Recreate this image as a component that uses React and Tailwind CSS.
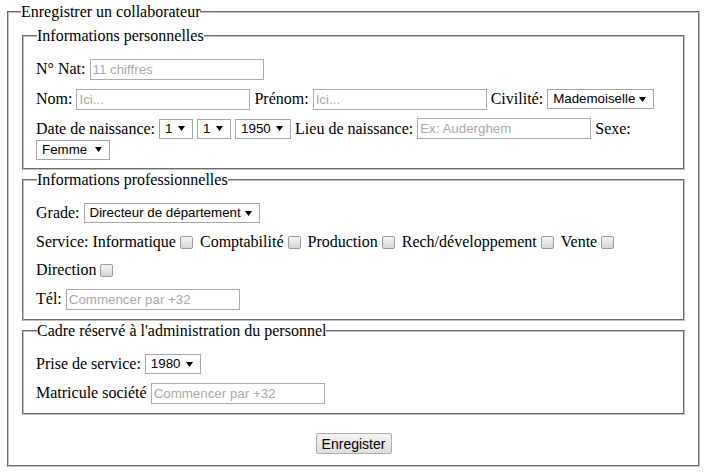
import React from "react";

function Field({ ph }) {
  return (
    <input
      type="text"
      placeholder={ph}
      className="h-[21px] w-[174px] shrink-0 border border-[#ababab] bg-white px-[2px] font-['Liberation_Sans',Arial,sans-serif] text-[13.33px] text-black outline-none placeholder:text-[#a9a9a9]"
    />
  );
}

function Arrow() {
  return (
    <svg width="7" height="5" viewBox="0 0 7 5" className="ml-auto shrink-0">
      <path d="M0 0H7L3.5 5Z" fill="#000" />
    </svg>
  );
}

function Sel({ w, children }) {
  return (
    <span
      className={
        "inline-flex h-[20px] shrink-0 items-center whitespace-nowrap border border-[#a6a6a6] bg-white pl-[5px] pr-[7px] font-['Liberation_Sans',Arial,sans-serif] text-[13.33px] leading-none text-black " +
        w
      }
    >
      <span>{children}</span>
      <Arrow />
    </span>
  );
}

function Check() {
  return (
    <span className="ml-[4px] inline-block h-[13px] w-[13px] shrink-0 rounded-[2px] border border-[#9c9c9c] bg-linear-to-b from-[#f5f5f5] to-[#d4d4d4]" />
  );
}

function Item({ children }) {
  return (
    <span className="flex h-[28px] items-center whitespace-nowrap">{children}</span>
  );
}

export default function App() {
  return (
    <div className="min-h-[473px] bg-white pl-[7px] pr-[8px] pt-[3px] font-['Liberation_Serif','Times_New_Roman',serif] text-[16px] text-black">
      <fieldset className="border-2 border-[#c0c0c0] px-[12px] pb-[11px] pt-[6px] [border-style:groove]">
        <legend className="leading-[18px]">Enregistrer un collaborateur</legend>

        <fieldset className="mx-[1px] border-2 border-[#c0c0c0] px-[12px] pb-[8px] pt-[13px] [border-style:groove]">
          <legend className="ml-[1px] leading-[18px]">Informations personnelles</legend>
          <div className="flex flex-col gap-[8px]">
            <div className="flex h-[22px] items-center gap-x-[4px]">
              <span>N° Nat:</span>
              <Field ph="11 chiffres" />
            </div>
            <div className="flex h-[22px] items-center gap-x-[4px] whitespace-nowrap">
              <span>Nom:</span>
              <Field ph="Ici..." />
              <span>Prénom:</span>
              <Field ph="Ici..." />
              <span>Civilité:</span>
              <Sel w="w-[107px]">Mademoiselle</Sel>
            </div>
            <div className="flex flex-wrap items-center gap-x-[4px]">
              <span className="flex h-[21px] items-center whitespace-nowrap">Date de naissance:</span>
              <span className="flex h-[21px] items-center">
                <Sel w="w-[34px]">1</Sel>
              </span>
              <span className="flex h-[21px] items-center">
                <Sel w="w-[34px]">1</Sel>
              </span>
              <span className="flex h-[21px] items-center">
                <Sel w="w-[56px]">1950</Sel>
              </span>
              <span className="flex h-[21px] items-center whitespace-nowrap">Lieu de naissance:</span>
              <span className="flex h-[21px] items-center">
                <Field ph="Ex: Auderghem" />
              </span>
              <span className="flex h-[21px] items-center">Sexe:</span>
              <span className="flex h-[21px] items-center">
                <Sel w="w-[74px]">Femme</Sel>
              </span>
            </div>
          </div>
        </fieldset>

        <fieldset className="mx-[1px] mt-[1px] border-2 border-[#c0c0c0] px-[12px] pb-[9px] pt-[13px] [border-style:groove]">
          <legend className="ml-[1px] leading-[18px]">Informations professionnelles</legend>
          <div className="flex h-[22px] items-center gap-x-[4px]">
            <span>Grade:</span>
            <Sel w="w-[176px]">Directeur de département</Sel>
          </div>
          <div className="mt-[4px] flex flex-wrap items-center gap-x-[7px]">
            <Item>
              Service: Informatique
              <Check />
            </Item>
            <Item>
              Comptabilité
              <Check />
            </Item>
            <Item>
              Production
              <Check />
            </Item>
            <Item>
              Rech/développement
              <Check />
            </Item>
            <Item>
              Vente
              <Check />
            </Item>
            <Item>
              Direction
              <Check />
            </Item>
          </div>
          <div className="mt-[4px] flex h-[22px] items-center gap-x-[4px]">
            <span>Tél:</span>
            <Field ph="Commencer par +32" />
          </div>
        </fieldset>

        <fieldset className="mx-[1px] mt-[1px] border-2 border-[#c0c0c0] px-[12px] pb-[9px] pt-[13px] [border-style:groove]">
          <legend className="ml-[1px] leading-[18px]">Cadre réservé à l'administration du personnel</legend>
          <div className="flex h-[22px] items-center gap-x-[4px]">
            <span>Prise de service:</span>
            <Sel w="w-[56px]">1980</Sel>
          </div>
          <div className="mt-[7px] flex h-[22px] items-center gap-x-[4px]">
            <span>Matricule société</span>
            <Field ph="Commencer par +32" />
          </div>
        </fieldset>

        <div className="mt-[18px] flex justify-center">
          <button
            type="button"
            className="h-[21px] w-[76px] rounded-[2px] border border-[#acacac] bg-linear-to-b from-[#f3f3f3] to-[#dedede] font-['Liberation_Sans',Arial,sans-serif] text-[14px] leading-none text-black"
          >
            Enregister
          </button>
        </div>
      </fieldset>
    </div>
  );
}
